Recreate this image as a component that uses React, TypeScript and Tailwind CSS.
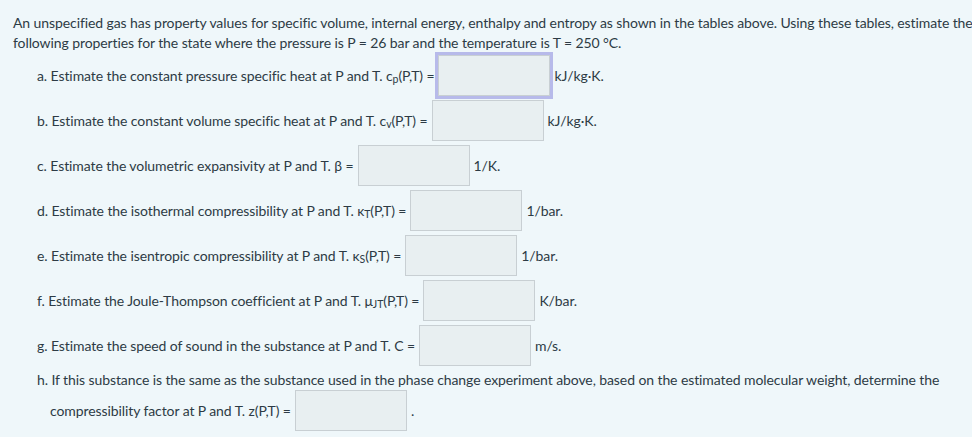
import React from 'react';

const AnswerBox: React.FC<{ focused?: boolean }> = ({ focused }) => (
  <input
    type="text"
    className={`mx-[4px] h-[41px] w-[112px] shrink-0 border border-[#c8cfd3] bg-[#e8eff1] outline-none ${
      focused ? 'ring-[3px] ring-[#b7baea]' : ''
    }`}
  />
);

interface RowProps {
  label: React.ReactNode;
  unit: string;
  focused?: boolean;
}

const QuestionRow: React.FC<RowProps> = ({ label, unit, focused }) => (
  <div className="flex h-[45px] items-center pl-[37px]">
    <span className="whitespace-nowrap">{label}</span>
    <AnswerBox focused={focused} />
    <span className="whitespace-nowrap">{unit}</span>
  </div>
);

const App: React.FC = () => {
  return (
    <div
      className="min-h-screen w-full overflow-hidden bg-[#eff7fa] text-[14px] leading-5 tracking-[-0.09px] text-[#2d3b45]"
      style={{ fontFamily: 'Lato, "Open Sans", sans-serif' }}
    >
      <p className="whitespace-nowrap pl-[13px] pt-[13px]">
        An unspecified gas has property values for specific volume, internal energy, enthalpy and entropy as shown in the tables above. Using these tables, estimate the
        <br />
        following properties for the state where the pressure is P = 26 bar and the temperature is T = 250 °C.
      </p>

      <QuestionRow
        focused
        label={<>a. Estimate the constant pressure specific heat at P and T. c<sub>p</sub>(P,T) =</>}
        unit="kJ/kg·K."
      />
      <QuestionRow
        label={<>b. Estimate the constant volume specific heat at P and T. c<sub>v</sub>(P,T) =</>}
        unit="kJ/kg·K."
      />
      <QuestionRow
        label={<>c. Estimate the volumetric expansivity at P and T. β =</>}
        unit="1/K."
      />
      <QuestionRow
        label={<>d. Estimate the isothermal compressibility at P and T. κ<sub>T</sub>(P,T) =</>}
        unit="1/bar."
      />
      <QuestionRow
        label={<>e. Estimate the isentropic compressibility at P and T. κ<sub>S</sub>(P,T) =</>}
        unit="1/bar."
      />
      <QuestionRow
        label={<>f. Estimate the Joule-Thompson coefficient at P and T. μ<sub>JT</sub>(P,T) =</>}
        unit="K/bar."
      />
      <QuestionRow
        label={<>g. Estimate the speed of sound in the substance at P and T. C =</>}
        unit="m/s."
      />

      <div className="pt-[2px]">
        <p className="whitespace-nowrap pl-[37px]">
          h. If this substance is the same as the substance used in the phase change experiment above, based on the estimated molecular weight, determine the
        </p>
        <div className="flex items-center pl-[50px]">
          <span className="whitespace-nowrap">compressibility factor at P and T. z(P,T) =</span>
          <AnswerBox />
          <span>.</span>
        </div>
      </div>
    </div>
  );
};

export default App;
